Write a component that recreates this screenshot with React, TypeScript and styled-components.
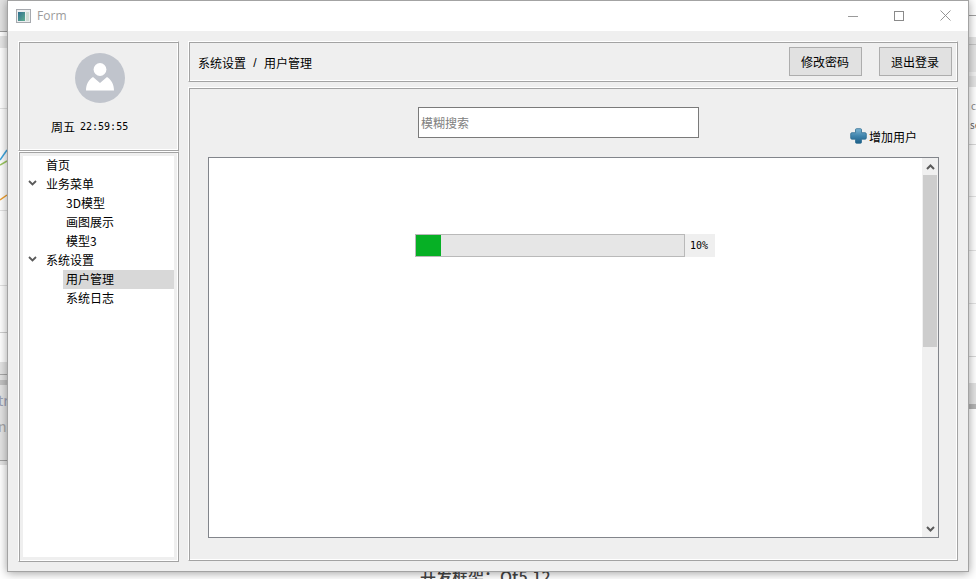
import React from "react";
import styled, { createGlobalStyle } from "styled-components";

const CJK = `"Noto Sans CJK SC", "Liberation Sans", sans-serif`;

const Global = createGlobalStyle`
  html, body { margin: 0; padding: 0; background: #fff; overflow: hidden; }
  * { box-sizing: border-box; }
`;

const Desktop = styled.div`
  position: relative;
  width: 976px;
  height: 579px;
  overflow: hidden;
  padding-left: 7px;
  background: #fff;
  font-family: ${CJK};
  font-size: 12px;
  color: #000;
`;

const Backdrop = styled.svg`
  position: absolute;
  inset: 0;
`;

const BehindText = styled.span<{ $x: number; $y: number; $color: string; $size: number; $bold?: boolean }>`
  position: absolute;
  left: ${(p) => p.$x}px;
  top: ${(p) => p.$y}px;
  color: ${(p) => p.$color};
  font-size: ${(p) => p.$size}px;
  font-weight: ${(p) => (p.$bold ? 500 : 400)};
  line-height: 20px;
  white-space: nowrap;
`;

const Window = styled.div`
  position: relative;
  width: 962px;
  height: 572px;
  display: flex;
  flex-direction: column;
  background: #efefef;
  border: 1px solid #a3a3a3;
  box-shadow: 0 1px 9px rgba(0, 0, 0, 0.38);
`;

const TitleBar = styled.div`
  height: 30px;
  flex: none;
  display: flex;
  align-items: center;
  padding-left: 8px;
  background: #fff;
`;

const TitleText = styled.span`
  margin: -1px 0 0 6px;
  font-family: "Open Sans", sans-serif;
  font-size: 12px;
  color: #9b9b9b;
  letter-spacing: 0.1px;
`;

const TitleControls = styled.div`
  margin-left: auto;
  display: flex;
`;

const ControlButton = styled.div`
  width: 46px;
  height: 30px;
  padding-bottom: 1px;
  display: flex;
  align-items: center;
  justify-content: center;
`;

const Body = styled.div`
  flex: 1;
  display: flex;
  align-items: flex-start;
  gap: 9px;
  padding: 10px 10px 0;
`;

const Frame = styled.div`
  border: 1px solid;
  border-color: #fff #a3a3a3 #a3a3a3 #fff;
  box-shadow: inset 1px 1px 0 #a3a3a3, inset -1px -1px 0 #fff;
`;

const LeftColumn = styled.div`
  width: 161px;
  display: flex;
  flex-direction: column;
`;

const ProfileFrame = styled(Frame)`
  height: 110px;
  display: flex;
  flex-direction: column;
  padding: 11px 0 0 32px;
`;

const AvatarSvg = styled.svg`
  display: block;
  margin-left: 24px;
`;

const Clock = styled.div`
  margin-top: 13px;
  height: 20px;
  display: flex;
  align-items: center;
  gap: 5px;
`;

const ClockTime = styled.span`
  font-family: "DejaVu Sans Mono", monospace;
  font-size: 10px;
  letter-spacing: 0;
`;

const TreeFrame = styled(Frame)`
  height: 411px;
  padding: 4px;
`;

const Tree = styled.div`
  height: 100%;
  background: #fff;
`;

const TreeRow = styled.div<{ $level: number }>`
  height: 19px;
  position: relative;
  display: flex;
  padding-left: ${(p) => (p.$level === 0 ? 20 : 40)}px;
`;

const TreeLabel = styled.div<{ $selected?: boolean }>`
  flex: 1;
  padding-left: 3px;
  line-height: 17px;
  background: ${(p) => (p.$selected ? "#d8d8d8" : "transparent")};
`;

const Caret = styled.svg`
  position: absolute;
  left: 5px;
  top: 5px;
`;

const RightColumn = styled.div`
  width: 770px;
  display: flex;
  flex-direction: column;
  gap: 5px;
`;

const HeaderFrame = styled(Frame)`
  height: 41px;
  display: flex;
  align-items: center;
  padding: 0 5px 0 9px;
`;

const Breadcrumb = styled.div`
  flex: 1;
  display: flex;
  align-items: center;
  height: 20px;
  line-height: 20px;
  padding-top: 2px;
`;

const Separator = styled.span`
  width: 18px;
  text-align: center;
  font-family: "Liberation Sans", sans-serif;
  font-size: 12px;
`;

const ActionButton = styled.button`
  width: 73px;
  height: 29px;
  margin-left: 17px;
  padding: 0 1px 0 0;
  background: #e1e1e1;
  border: 1px solid #adadad;
  font: inherit;
  color: #000;
`;

const ContentFrame = styled(Frame)`
  height: 474px;
  display: flex;
  flex-direction: column;
  padding: 19px 18px 22px 19px;
`;

const SearchRow = styled.div`
  height: 50px;
  flex: none;
  display: flex;
  align-items: flex-start;
  padding-left: 210px;
`;

const SearchInput = styled.input`
  width: 281px;
  height: 31px;
  padding: 0 2px;
  background: #fff;
  border: 1px solid #7a7a7a;
  outline: none;
  font: inherit;
  &::placeholder {
    color: #808080;
    opacity: 1;
  }
`;

const AddUser = styled.div`
  margin: 21px 0 0 151px;
  height: 16px;
  display: flex;
  align-items: center;
  gap: 2px;
`;

const ListBox = styled.div`
  width: 731px;
  flex: 1;
  display: flex;
  background: #fff;
  border: 1px solid #82858b;
`;

const ListBody = styled.div`
  flex: 1;
  padding: 76px 0 0 206px;
`;

const ProgressRow = styled.div`
  display: flex;
  height: 23px;
`;

const ProgressTrack = styled.div`
  width: 270px;
  background: #e6e6e6;
  border: 1px solid #b9b9b9;
`;

const ProgressFill = styled.div`
  height: 100%;
  background: #06b025;
`;

const ProgressLabel = styled.div`
  width: 30px;
  padding-left: 5px;
  background: #efefef;
  font-family: "DejaVu Sans Mono", monospace;
  font-size: 10px;
  line-height: 23px;
`;

const ScrollBar = styled.div`
  width: 16px;
  flex: none;
  display: flex;
  flex-direction: column;
  background: #f0f0f0;
`;

const ScrollArrow = styled.div`
  height: 17px;
  flex: none;
  display: flex;
  align-items: center;
  justify-content: center;
`;

const ScrollThumb = styled.div`
  height: 172px;
  margin: 0 1px;
  background: #cdcdcd;
`;

const ScrollGap = styled.div`
  flex: 1;
`;

const WindowIcon = () => (
  <svg width="15" height="14" viewBox="0 0 15 14">
    <defs>
      <linearGradient id="winIconFill" x1="0" y1="0" x2="1" y2="1">
        <stop offset="0" stopColor="#2f6f8f" />
        <stop offset="1" stopColor="#5fae90" />
      </linearGradient>
    </defs>
    <rect x="0.5" y="0.5" width="14" height="13" fill="#eceef0" stroke="#a6a9ae" />
    <rect x="2" y="3" width="7" height="9" fill="url(#winIconFill)" />
    <rect x="10" y="3" width="3" height="9" fill="#cfdcd4" />
  </svg>
);

const PlusIcon = () => (
  <svg width="17" height="16" viewBox="0 0 17 16">
    <defs>
      <linearGradient id="plusFill" x1="0" y1="0" x2="0" y2="1">
        <stop offset="0" stopColor="#7fb6d3" />
        <stop offset="0.5" stopColor="#3f84ad" />
        <stop offset="1" stopColor="#1d5f88" />
      </linearGradient>
    </defs>
    <path
      d="M6.5 0.7 H10.5 Q11.5 0.7 11.5 1.7 V4.7 H15 Q16.3 4.7 16.3 5.9 V10 Q16.3 11.2 15 11.2 H11.5 V14.3 Q11.5 15.3 10.5 15.3 H6.5 Q5.5 15.3 5.5 14.3 V11.2 H2 Q0.7 11.2 0.7 10 V5.9 Q0.7 4.7 2 4.7 H5.5 V1.7 Q5.5 0.7 6.5 0.7 Z"
      fill="url(#plusFill)"
      stroke="#2f6d92"
      strokeWidth="0.8"
    />
  </svg>
);

const Chevron = ({ up }: { up?: boolean }) => (
  <svg width="9" height="6" viewBox="0 0 9 6">
    <path d={up ? "M1 5 L4.5 1.5 L8 5" : "M1 1 L4.5 4.5 L8 1"} fill="none" stroke="#5a5a5a" strokeWidth="2" />
  </svg>
);

type Node = { label: string; level: number; open?: boolean; selected?: boolean };

const nodes: Node[] = [
  { label: "首页", level: 0 },
  { label: "业务菜单", level: 0, open: true },
  { label: "3D模型", level: 1 },
  { label: "画图展示", level: 1 },
  { label: "模型3", level: 1 },
  { label: "系统设置", level: 0, open: true },
  { label: "用户管理", level: 1, selected: true },
  { label: "系统日志", level: 1 },
];

export default function App() {
  return (
    <Desktop>
      <Global />
      <Backdrop width="976" height="579" viewBox="0 0 976 579">
        <rect x="0" y="0" width="7" height="31" fill="#e3e3e3" />
        <rect x="0" y="31" width="7" height="1" fill="#9c9c9c" />
        <rect x="0" y="36" width="7" height="12" fill="#e6e6e6" />
        <rect x="0" y="108" width="7" height="1" fill="#e2e2e2" />
        <rect x="0" y="210" width="7" height="1" fill="#e2e2e2" />
        <rect x="0" y="285" width="7" height="1" fill="#e2e2e2" />
        <rect x="0" y="332" width="7" height="1" fill="#cfcfcf" />
        <rect x="0" y="362" width="7" height="103" fill="#e4e4e4" />
        <rect x="0" y="374" width="7" height="1" fill="#a8a8a8" />
        <rect x="0" y="380" width="7" height="5" fill="#c2c2c2" />
        <rect x="0" y="460" width="7" height="1" fill="#a0a0a0" />
        <path d="M0 160 L7 150" stroke="#3ea6e0" strokeWidth="1.5" fill="none" />
        <path d="M0 165 L7 161" stroke="#9cc860" strokeWidth="1.5" fill="none" />
        <path d="M0 200 L7 195" stroke="#f0a030" strokeWidth="1.5" fill="none" />
        <rect x="969" y="15" width="7" height="1" fill="#a0a0a0" />
        <rect x="969" y="37" width="7" height="50" fill="#e4e4e4" />
        <rect x="969" y="44" width="7" height="1" fill="#c4c4c4" />
        <rect x="969" y="72" width="7" height="4" fill="#f2f2f2" />
        <rect x="969" y="144" width="7" height="1" fill="#d8d8d8" />
        <rect x="969" y="196" width="7" height="1" fill="#e2e2e2" />
        <rect x="969" y="250" width="7" height="1" fill="#e2e2e2" />
        <rect x="969" y="303" width="7" height="1" fill="#e2e2e2" />
        <rect x="969" y="356" width="7" height="1" fill="#d8d8d8" />
        <rect x="969" y="383" width="7" height="26" fill="#e2e2e2" />
        <rect x="969" y="404" width="7" height="5" fill="#b4b4b4" />
      </Backdrop>
      <BehindText $x={-2} $y={390} $color="#9aa0b4" $size={14}>tr</BehindText>
      <BehindText $x={-2} $y={416} $color="#a8a8a8" $size={14}>na</BehindText>
      <BehindText $x={971} $y={96} $color="#8a8a8a" $size={10}>cl</BehindText>
      <BehindText $x={970} $y={115} $color="#666" $size={10}>se</BehindText>
      <BehindText $x={420} $y={566} $color="#444" $size={16} $bold>开发框架：Qt5.12</BehindText>
      <Window>
        <TitleBar>
          <WindowIcon />
          <TitleText>Form</TitleText>
          <TitleControls>
            <ControlButton>
              <svg width="10" height="10" viewBox="0 0 10 10">
                <path d="M0 5.5 H10" stroke="#9a9a9a" />
              </svg>
            </ControlButton>
            <ControlButton>
              <svg width="10" height="10" viewBox="0 0 10 10">
                <rect x="0.5" y="0.5" width="9" height="9" fill="none" stroke="#8a8a8a" />
              </svg>
            </ControlButton>
            <ControlButton>
              <svg width="11" height="11" viewBox="0 0 11 11">
                <path d="M0.5 0.5 L10.5 10.5 M10.5 0.5 L0.5 10.5" stroke="#8a8a8a" strokeWidth="0.9" />
              </svg>
            </ControlButton>
          </TitleControls>
        </TitleBar>
        <Body>
          <LeftColumn>
            <ProfileFrame>
              <AvatarSvg width="50" height="50" viewBox="0 0 50 50">
                <circle cx="25" cy="25" r="25" fill="#c0c4cc" />
                <circle cx="25" cy="16.5" r="6.4" fill="#fff" />
                <path d="M11 37.5 C11 31 14 26.5 18 24 L25 30 L32 24 C36 26.5 39 31 39 37.5 Z" fill="#fff" />
              </AvatarSvg>
              <Clock>
                <span>周五</span>
                <ClockTime>22:59:55</ClockTime>
              </Clock>
            </ProfileFrame>
            <TreeFrame>
              <Tree>
                {nodes.map((n) => (
                  <TreeRow key={n.label} $level={n.level}>
                    {n.open && (
                      <Caret width="9" height="6" viewBox="0 0 9 6">
                        <path d="M1 1 L4.5 4.5 L8 1" fill="none" stroke="#5a5a5a" strokeWidth="1.8" />
                      </Caret>
                    )}
                    <TreeLabel $selected={n.selected}>{n.label}</TreeLabel>
                  </TreeRow>
                ))}
              </Tree>
            </TreeFrame>
          </LeftColumn>
          <RightColumn>
            <HeaderFrame>
              <Breadcrumb>
                <span>系统设置</span>
                <Separator>/</Separator>
                <span>用户管理</span>
              </Breadcrumb>
              <ActionButton>修改密码</ActionButton>
              <ActionButton>退出登录</ActionButton>
            </HeaderFrame>
            <ContentFrame>
              <SearchRow>
                <SearchInput placeholder="模糊搜索" readOnly />
                <AddUser>
                  <PlusIcon />
                  <span>增加用户</span>
                </AddUser>
              </SearchRow>
              <ListBox>
                <ListBody>
                  <ProgressRow>
                    <ProgressTrack>
                      <ProgressFill style={{ width: "25px" }} />
                    </ProgressTrack>
                    <ProgressLabel>10%</ProgressLabel>
                  </ProgressRow>
                </ListBody>
                <ScrollBar>
                  <ScrollArrow>
                    <Chevron up />
                  </ScrollArrow>
                  <ScrollThumb />
                  <ScrollGap />
                  <ScrollArrow>
                    <Chevron />
                  </ScrollArrow>
                </ScrollBar>
              </ListBox>
            </ContentFrame>
          </RightColumn>
        </Body>
      </Window>
    </Desktop>
  );
}
